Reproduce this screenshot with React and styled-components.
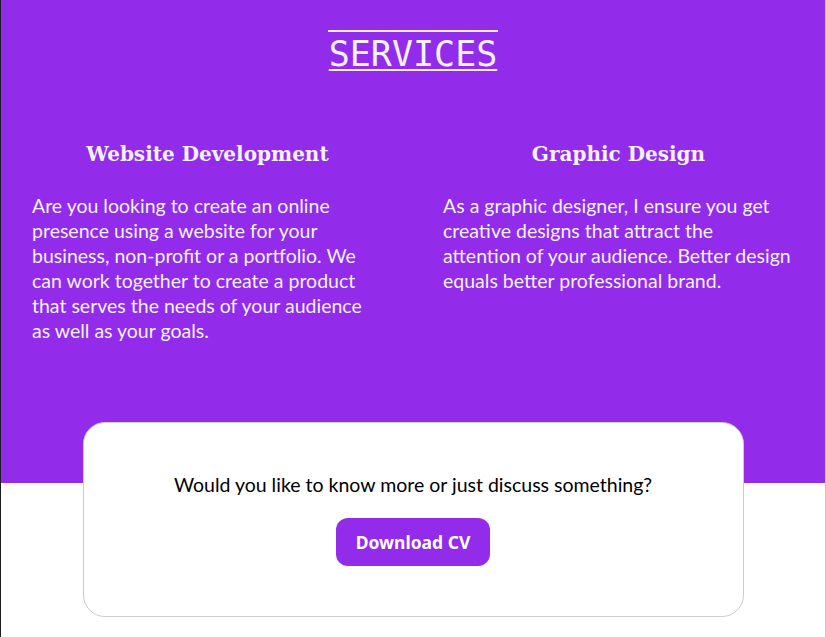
import React from "react";
import styled, { createGlobalStyle } from "styled-components";

const Global = createGlobalStyle`
  html, body { margin: 0; padding: 0; background: #ffffff; }
  * { box-sizing: border-box; }
`;

const PURPLE = "#922bea";
const LIGHT = "#f2f1ff";

const Page = styled.div`
  width: 826px;
  min-height: 637px;
  border-left: 1px solid #1e1e1e;
  border-right: 1px solid #c8c8c8;
  background: #ffffff;
  font-family: "Lato", "Liberation Sans", sans-serif;
`;

const Services = styled.section`
  background: ${PURPLE};
  padding: 30px 31px 140px;
  display: flex;
  flex-direction: column;
  align-items: center;
`;

const Title = styled.h2`
  margin: 0;
  display: inline-block;
  font-family: "DejaVu Sans Mono", "Liberation Mono", monospace;
  font-weight: 400;
  font-size: 35px;
  line-height: 38px;
  color: ${LIGHT};
  border-top: 2px solid ${LIGHT};
  padding: 3px 1px 0;
  text-decoration: underline;
  text-decoration-thickness: 2px;
  text-underline-offset: 3px;
`;

const Columns = styled.div`
  align-self: stretch;
  display: grid;
  grid-template-columns: 1fr 1fr;
  column-gap: 60px;
  margin-top: 69px;
`;

const Column = styled.div`
  display: flex;
  flex-direction: column;
`;

const ColumnTitle = styled.h3`
  margin: 0 0 27px;
  text-align: center;
  font-family: "DejaVu Serif", "Liberation Serif", serif;
  font-weight: 700;
  font-size: 20px;
  line-height: 24px;
  color: ${LIGHT};
`;

const Text = styled.p`
  margin: 0;
  font-size: 19.5px;
  line-height: 25px;
  color: ${LIGHT};
`;

const Card = styled.div`
  width: 661px;
  margin: -61px auto 0;
  background: #ffffff;
  border: 1px solid #cccccc;
  border-radius: 22px;
  padding: 49px 20px 50px;
  display: flex;
  flex-direction: column;
  align-items: center;
  gap: 21px;
`;

const Question = styled.p`
  margin: 0;
  font-size: 19.5px;
  line-height: 25px;
  color: #000000;
`;

const Button = styled.button`
  height: 48px;
  padding: 0 20px;
  border: none;
  border-radius: 12px;
  background: ${PURPLE};
  color: #ffffff;
  font-family: "Noto Sans", "Open Sans", sans-serif;
  font-weight: 700;
  font-size: 17.5px;
  cursor: pointer;
`;

export default function App() {
  return (
    <Page>
      <Global />
      <Services>
        <Title>SERVICES</Title>
        <Columns>
          <Column>
            <ColumnTitle>Website Development</ColumnTitle>
            <Text>
              Are you looking to create an online presence using a website for
              your business, non-profit or a portfolio. We can work together to
              create a product that serves the needs of your audience as well as
              your goals.
            </Text>
          </Column>
          <Column>
            <ColumnTitle>Graphic Design</ColumnTitle>
            <Text>
              As a graphic designer, I ensure you get creative designs that
              attract the attention of your audience. Better design equals
              better professional brand.
            </Text>
          </Column>
        </Columns>
      </Services>
      <Card>
        <Question>Would you like to know more or just discuss something?</Question>
        <Button>Download CV</Button>
      </Card>
    </Page>
  );
}
